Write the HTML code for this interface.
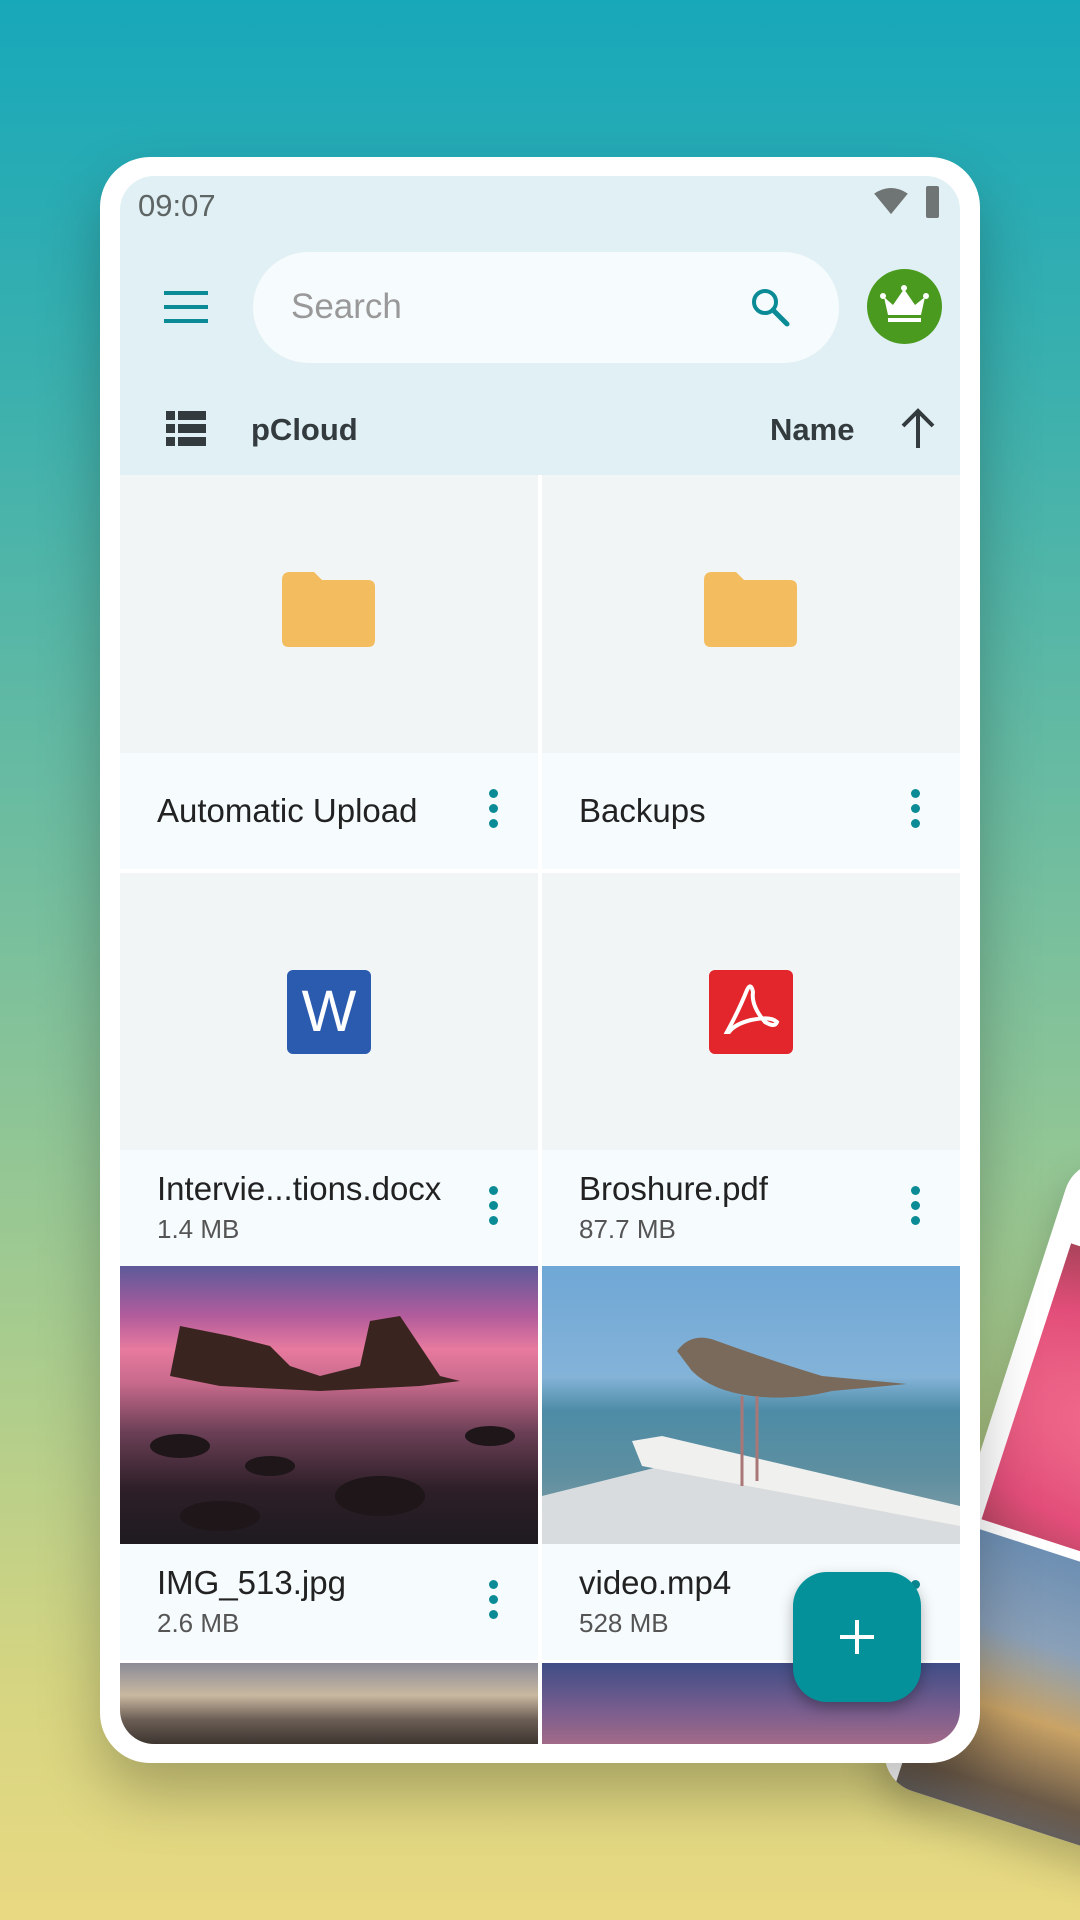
<!DOCTYPE html>
<html style="width:1080px;height:1920px;overflow:hidden;background:#e9d982"><head><meta charset="utf-8"><style>
*{margin:0;padding:0;box-sizing:border-box}
body{width:1080px;height:1920px;overflow:hidden;position:relative;font-family:"Liberation Sans",sans-serif;
background:linear-gradient(180deg,#17a8ba 0%,#3bb0ae 20%,#7cc09c 50%,#a8cc8e 70%,#d6d581 88%,#e9d982 100%)}
.tilt{position:absolute;left:1078px;top:1151px;width:620px;height:660px;background:#fff;border-radius:40px;transform:rotate(18deg);transform-origin:0 0;box-shadow:0 20px 40px rgba(0,0,0,.2);overflow:hidden}
.phone{position:absolute;left:100px;top:157px;width:880px;height:1606px;background:#fff;border-radius:50px;box-shadow:0 30px 60px rgba(0,0,0,.25)}
.screen{position:absolute;left:20px;top:19px;width:840px;height:1568px;border-radius:34px;overflow:hidden;background:#fff}
.head{position:absolute;left:0;top:0;width:840px;height:299px;background:#e1f0f4}
.cell{position:absolute;width:418px}
.thumb{height:278px;background:#f2f5f6;position:relative;overflow:hidden}
.lab{height:116px;background:#f6fbfd;position:relative}
.name{position:absolute;left:37px;font-size:33px;color:#222}
.size{position:absolute;left:37px;font-size:26px;color:#555}
.dots{position:absolute;right:40px;width:9px}
.dots i{display:block;width:9px;height:9px;border-radius:50%;background:#0a8b95;margin-bottom:6px}
.folder{position:absolute;left:162px;top:97px;width:93px;height:75px}
</style></head><body>
<div class="tilt">
 <div style="position:absolute;left:22px;top:90px;width:640px;height:290px;background:radial-gradient(ellipse at 30% 55%,#f5a070 0%,#f06a8c 15%,#e24e79 50%,#7a3a40 100%)"></div>
 <div style="position:absolute;left:22px;top:390px;width:640px;height:300px;background:linear-gradient(180deg,#6d8fb3 0%,#8aa0b8 30%,#c9a366 55%,#6b5a48 80%,#5d6370 100%)"></div>
</div>
<div class="phone"><div class="screen">
 <div class="head">
  <div style="position:absolute;left:18px;top:12px;font-size:31px;color:#5f6565">09:07</div>
  <svg style="position:absolute;left:752px;top:12px" width="38" height="28" viewBox="0 0 40 30"><path d="M2 6Q20-6 38 6L20 28Z" fill="#6f7474"/></svg>
  <div style="position:absolute;left:806px;top:10px;width:13px;height:32px;background:#6f7474;border-radius:2px"></div>
  <div style="position:absolute;left:44px;top:115px;width:44px">
   <div style="height:4px;background:#0a8b95;margin-bottom:10px"></div><div style="height:4px;background:#0a8b95;margin-bottom:10px"></div><div style="height:4px;background:#0a8b95"></div></div>
  <div style="position:absolute;left:133px;top:76px;width:586px;height:111px;border-radius:56px;background:#f6fbfd">
   <div style="position:absolute;left:38px;top:35px;font-size:35px;color:#999">Search</div>
   <svg style="position:absolute;left:496px;top:34px" width="44" height="44" viewBox="0 0 44 44"><circle cx="16" cy="16" r="11" fill="none" stroke="#0a8b95" stroke-width="4"/><path d="M24 24L38 38" stroke="#0a8b95" stroke-width="5" stroke-linecap="round"/></svg>
  </div>
  <div style="position:absolute;left:747px;top:93px;width:75px;height:75px;border-radius:50%;background:#4a9a1f">
   <svg style="position:absolute;left:12px;top:14px" width="51" height="45" viewBox="0 0 51 45"><path d="M5 14L14 22L25 6L36 22L46 14L42 32H9Z" fill="#fff"/><circle cx="25" cy="5" r="3" fill="#fff"/><circle cx="4" cy="13" r="3" fill="#fff"/><circle cx="47" cy="13" r="3" fill="#fff"/><rect x="9" y="35" width="33" height="4" fill="#fff"/></svg>
  </div>
  <svg style="position:absolute;left:46px;top:235px" width="40" height="35" viewBox="0 0 40 35"><g fill="#333b3e"><rect x="0" y="0" width="9" height="9"/><rect x="12" y="0" width="28" height="9"/><rect x="0" y="13" width="9" height="9"/><rect x="12" y="13" width="28" height="9"/><rect x="0" y="26" width="9" height="9"/><rect x="12" y="26" width="28" height="9"/></g></svg>
  <div style="position:absolute;left:131px;top:236px;font-size:31px;font-weight:bold;color:#333b3e">pCloud</div>
  <div style="position:absolute;left:650px;top:236px;font-size:31px;font-weight:bold;color:#333b3e">Name</div>
  <svg style="position:absolute;left:778px;top:232px" width="40" height="42" viewBox="0 0 40 42"><path d="M20 40V4M5 18L20 3L35 18" fill="none" stroke="#333b3e" stroke-width="4"/></svg>
 </div>

 <div class="cell" style="left:0;top:299px"><div class="thumb"><svg class="folder" viewBox="0 0 93 75"><path d="M0 8Q0 0 8 0H32L40 8H86Q93 8 93 15V68Q93 75 86 75H7Q0 75 0 68Z" fill="#f3bd5f"/></svg></div><div class="lab"><div class="name" style="top:39px">Automatic Upload</div><div class="dots" style="top:36px"><i></i><i></i><i></i></div></div></div>
 <div class="cell" style="left:422px;top:299px"><div class="thumb"><svg class="folder" viewBox="0 0 93 75"><path d="M0 8Q0 0 8 0H32L40 8H86Q93 8 93 15V68Q93 75 86 75H7Q0 75 0 68Z" fill="#f3bd5f"/></svg></div><div class="lab"><div class="name" style="top:39px">Backups</div><div class="dots" style="top:36px"><i></i><i></i><i></i></div></div></div>
 <div class="cell" style="left:0;top:697px"><div class="thumb" style="height:277px"><div style="position:absolute;left:167px;top:97px;width:84px;height:84px;border-radius:6px;background:#2b5bae;color:#fff;font-size:58px;text-align:center;line-height:84px">W</div></div><div class="lab"><div class="name" style="top:20px">Intervie...tions.docx</div><div class="size" style="top:64px">1.4 MB</div><div class="dots" style="top:36px"><i></i><i></i><i></i></div></div></div>
 <div class="cell" style="left:422px;top:697px"><div class="thumb" style="height:277px"><div style="position:absolute;left:167px;top:97px;width:84px;height:84px;border-radius:6px;background:#e3262b"><svg width="84" height="84" viewBox="0 0 84 84"><path d="M18 62Q30 40 38 20Q42 12 44 22Q42 36 56 52Q66 58 68 52Q62 46 42 50Q26 54 20 62Z" fill="none" stroke="#fff" stroke-width="4"/></svg></div></div><div class="lab"><div class="name" style="top:20px">Broshure.pdf</div><div class="size" style="top:64px">87.7 MB</div><div class="dots" style="top:36px"><i></i><i></i><i></i></div></div></div>
 <div class="cell" style="left:0;top:1090px"><div class="thumb" style="background:linear-gradient(180deg,#5d5a9a 0%,#b25c9c 18%,#e77a9e 30%,#c86a8c 42%,#6a3f55 60%,#2e1f28 80%,#1e1a20 100%)">
  <svg style="position:absolute;left:0;top:0" width="418" height="278" viewBox="0 0 418 278"><path d="M50 110L60 60L110 70L150 80L170 100L200 110L240 100L250 55L280 50L300 80L320 110L340 115L300 120L200 125L100 120Z" fill="#3a2420"/><g fill="#1e1618"><ellipse cx="60" cy="180" rx="30" ry="12"/><ellipse cx="150" cy="200" rx="25" ry="10"/><ellipse cx="260" cy="230" rx="45" ry="20"/><ellipse cx="370" cy="170" rx="25" ry="10"/><ellipse cx="100" cy="250" rx="40" ry="15"/></g></svg></div><div class="lab"><div class="name" style="top:20px">IMG_513.jpg</div><div class="size" style="top:64px">2.6 MB</div><div class="dots" style="top:36px"><i></i><i></i><i></i></div></div></div>
 <div class="cell" style="left:422px;top:1090px"><div class="thumb" style="background:linear-gradient(180deg,#6fa7d6 0%,#84b3d8 40%,#4d8ca6 52%,#5e8fa0 75%,#8aa0a8 100%)">
  <svg style="position:absolute;left:0;top:0" width="418" height="278" viewBox="0 0 418 278"><path d="M0 230L120 200L418 250V278H0Z" fill="#d9dcde"/><path d="M90 175L120 170L418 240V260L100 200Z" fill="#f0f0ee"/><path d="M135 85Q150 65 175 75Q230 95 280 110L365 118L290 125Q250 135 210 130Q170 125 150 105Z" fill="#7a6a5c"/><path d="M200 130V220M215 130V215" stroke="#a77" stroke-width="3"/></svg></div><div class="lab"><div class="name" style="top:20px">video.mp4</div><div class="size" style="top:64px">528 MB</div><div class="dots" style="top:36px"><i></i><i></i><i></i></div></div></div>
 <div style="position:absolute;left:0;top:1487px;width:418px;height:81px;background:linear-gradient(180deg,#8b8c98,#c9b8a0 40%,#6b5e55 70%,#3e3530)"></div>
 <div style="position:absolute;left:422px;top:1487px;width:418px;height:81px;background:linear-gradient(180deg,#3f4d86,#7a5e8e 60%,#a26a88)"></div>
 <div style="position:absolute;left:673px;top:1396px;width:128px;height:130px;border-radius:34px;background:#04919a;box-shadow:0 6px 14px rgba(0,0,0,.3)">
  <div style="position:absolute;left:47px;top:63px;width:34px;height:4px;background:#fff"></div><div style="position:absolute;left:62px;top:48px;width:4px;height:34px;background:#fff"></div></div>
</div></div>
</body></html>
